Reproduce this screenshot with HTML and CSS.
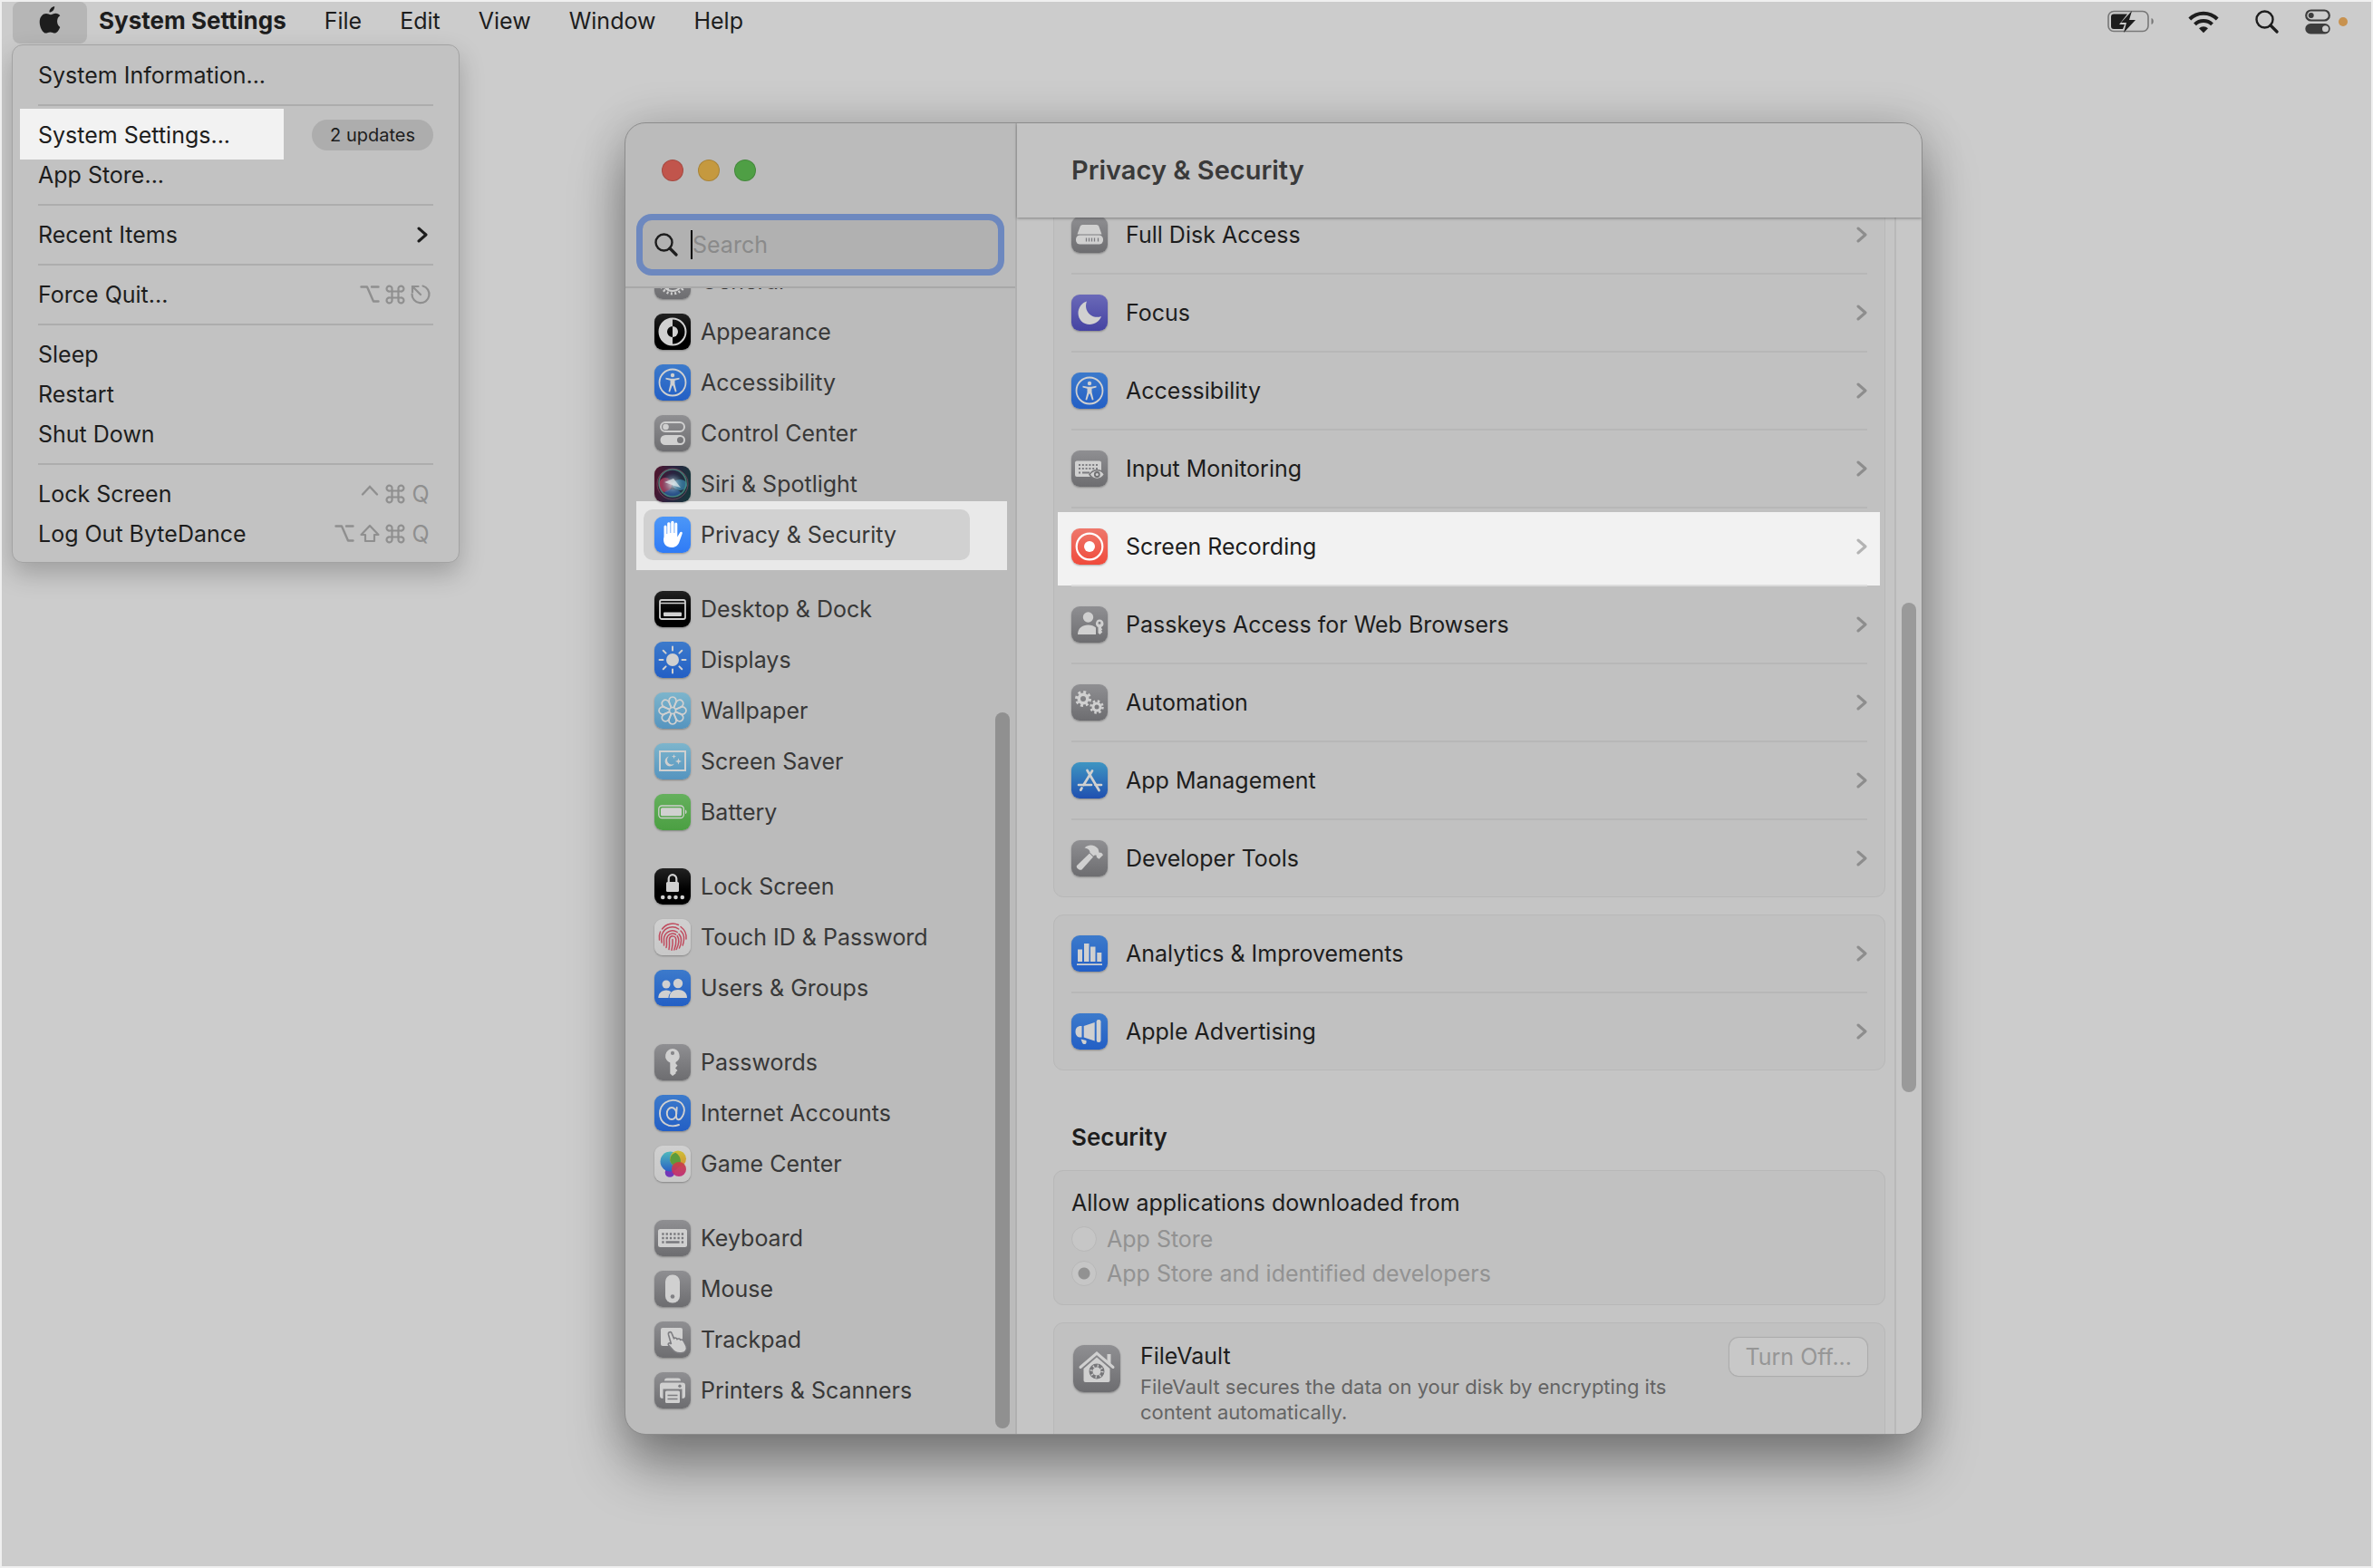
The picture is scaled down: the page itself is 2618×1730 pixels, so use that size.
FILE: index.html
```html
<!DOCTYPE html>
<html lang="en">
<head>
  <meta charset="UTF-8">
  <title>System Settings</title>
  <meta name="viewport" content="width=device-width, initial-scale=1">
  <link rel="stylesheet" href="styles.css">
</head>
<body>
  <!-- Shared icon shapes -->
  <svg class="sprite" aria-hidden="true">
    <defs>
      <linearGradient id="gc-blue" x1="0" y1="0" x2="0" y2="1"><stop offset="0" stop-color="#4fb9bd"/><stop offset="1" stop-color="#2a62c4"/></linearGradient>
      <linearGradient id="gc-yellow" x1="0" y1="0" x2="0" y2="1"><stop offset="0" stop-color="#cfc137"/><stop offset="1" stop-color="#cf8f35"/></linearGradient>
      <linearGradient id="gc-red" x1="0" y1="0" x2="0" y2="1"><stop offset="0" stop-color="#c9443f"/><stop offset="1" stop-color="#c02c78"/></linearGradient>
      <radialGradient id="siri-glow"><stop offset="0" stop-color="#ffffff"/><stop offset="0.35" stop-color="#b9cfd6" stop-opacity="0.8"/><stop offset="1" stop-color="#4b8fa8" stop-opacity="0"/></radialGradient>
      <mask id="gear-big"><rect width="40" height="40" fill="#fff"/><circle cx="13" cy="16" r="3" fill="#000"/></mask>
      <mask id="gear-small"><rect width="40" height="40" fill="#fff"/><circle cx="28" cy="25" r="2.5" fill="#000"/></mask>
    </defs>
    <symbol id="i-chevron" viewBox="0 0 12 18"><path d="M2 2l8 7-8 7" fill="none" stroke="currentColor" stroke-width="3" stroke-linecap="round" stroke-linejoin="round"/></symbol>
    <symbol id="i-search" viewBox="0 0 26 26"><circle cx="10.5" cy="10.5" r="9" fill="none" stroke="currentColor" stroke-width="2.4"/><path d="M17 17l7 7" stroke="currentColor" stroke-width="3.2" stroke-linecap="round"/></symbol>
    <symbol id="i-option" viewBox="0 0 28 28"><path d="M4.500 5.500h6.500l7 16h5.500M16 5.500h7.500" fill="none" stroke="currentColor" stroke-width="2.400" stroke-linecap="round" stroke-linejoin="round"/></symbol>
    <symbol id="i-command" viewBox="0 0 28 28"><path d="M10.500 10.500h7v7h-7zM10.500 10.500H8a3 3 0 1 1 2.500-2.500zM17.500 10.500V8a3 3 0 1 1 2.500 2.500zM17.500 17.500H20a3 3 0 1 1-2.500 2.500zM10.500 17.500V20a3 3 0 1 1-2.500-2.500z" fill="none" stroke="currentColor" stroke-width="2.200"/></symbol>
    <symbol id="i-power" viewBox="0 0 28 28"><path d="M16.500 4.500a9.500 9.500 0 1 1-12 9" fill="none" stroke="currentColor" stroke-width="2.200" stroke-linecap="round"/><path d="M14 14L5.500 5.500M5 11.500V5h6.500" fill="none" stroke="currentColor" stroke-width="2.200" stroke-linecap="round"/></symbol>
    <symbol id="i-control" viewBox="0 0 28 28"><path d="M6 14.500L14 6l8 8.500" fill="none" stroke="currentColor" stroke-width="2.400" stroke-linecap="round"/></symbol>
    <symbol id="i-shift" viewBox="0 0 28 28"><path d="M14 5l9.500 10H19v7H9v-7H4.500z" fill="none" stroke="currentColor" stroke-width="2.200" stroke-linejoin="round"/></symbol>

    <symbol id="i-gear" viewBox="0 0 40 40"><g fill="none" stroke="currentColor"><circle cx="20" cy="20" r="11" stroke-width="2"/><circle cx="20" cy="20" r="14" stroke-width="3" stroke-dasharray="2 2.400"/><circle cx="20" cy="20" r="4" stroke-width="1.500"/><path d="M24 20h7M18 23.500l-3.500 6M18 16.500l-3.500-6" stroke-width="1.500"/></g></symbol>
    <symbol id="i-appearance" viewBox="0 0 40 40"><circle cx="20" cy="20" r="14.500" fill="none" stroke="currentColor" stroke-width="2"/><path d="M20 5.500a14.500 14.500 0 0 0 0 29v-8.500a6 6 0 0 1 0-12z" fill="currentColor"/><path d="M20 14a6 6 0 0 1 0 12z" fill="currentColor"/></symbol>
    <symbol id="i-access" viewBox="0 0 40 40"><circle cx="20" cy="20" r="14.500" fill="none" stroke="currentColor" stroke-width="1.800"/><circle cx="20" cy="12" r="2.200" fill="currentColor"/><path d="M12.500 14.800l5.500 1h4l5.500-1v1.700l-5 1.200v4l2 8.300-1.600.4-2.400-7h-1l-2.400 7-1.600-.4 2-8.300v-4l-5-1.200z" fill="currentColor"/></symbol>
    <symbol id="i-toggles" viewBox="0 0 40 40"><rect x="7" y="8" width="26" height="10" rx="5" fill="none" stroke="currentColor" stroke-width="2"/><circle cx="12.500" cy="13" r="3.300" fill="currentColor"/><path fill-rule="evenodd" d="M12 22h16.500a5.500 5.500 0 0 1 0 11H12a5.500 5.500 0 0 1 0-11zM28.500 24a3.500 3.500 0 1 0 0 7 3.500 3.500 0 0 0 0-7z" fill="currentColor"/></symbol>
    <symbol id="i-siri" viewBox="0 0 40 40"><ellipse cx="12" cy="21" rx="7" ry="8" fill="#c2405f" opacity="0.700"/><ellipse cx="28" cy="21" rx="8" ry="6" fill="#3a86b0" opacity="0.700"/><ellipse cx="20" cy="30" rx="9" ry="4" fill="#2f6cba" opacity="0.600"/><circle cx="20" cy="20" r="12" fill="url(#siri-glow)" opacity="0.700"/><path d="M11 18l10-4 8 10-7-2z" fill="#e3ecee" opacity="0.700"/><circle cx="20" cy="19" r="15" fill="none" stroke="#4b9485" stroke-width="1.500" opacity="0.800"/><circle cx="20" cy="20" r="17" fill="none" stroke="#8b5265" stroke-width="0.700"/></symbol>
    <symbol id="i-hand" viewBox="0 0 40 40"><path d="M11.500 22V11a1.500 1.500 0 0 1 3 0v8h.7V7.500a1.700 1.700 0 0 1 3.300 0V18h.7V6.500a1.700 1.700 0 0 1 3.400 0V18h.7V8a1.500 1.500 0 0 1 3 0v14.500l2.700-4.800c1-1.600 3.300-.8 2.700 1l-3.500 9.800C26.500 32.500 23.500 34 20 34c-6 0-9-3.500-9-9z" fill="currentColor" transform="translate(-1 0)"/></symbol>
    <symbol id="i-desktop" viewBox="0 0 40 40"><rect x="6" y="10" width="28" height="21" rx="2" fill="none" stroke="currentColor" stroke-width="1.800"/><path d="M6 13.500h28" stroke="currentColor" stroke-width="1.500"/><rect x="10" y="23.500" width="20" height="4.500" rx="1" fill="currentColor"/></symbol>
    <symbol id="i-sun" viewBox="0 0 40 40"><circle cx="20" cy="20" r="7" fill="currentColor"/><path d="M20 5.500v4M20 30.500v4M5.500 20h4M30.500 20h4M9.700 9.700l2.900 2.900M27.400 27.400l2.900 2.900M9.700 30.300l2.900-2.900M27.400 12.600l2.900-2.900" stroke="currentColor" stroke-width="2" stroke-linecap="round"/></symbol>
    <symbol id="i-flower" viewBox="0 0 40 40">
      <g fill="none" stroke="currentColor" stroke-width="1.700">
        <path id="petal" d="M18.500 17L16.300 10.500a4 4 0 1 1 7.400 0L21.500 17"/>
        <use href="#petal" transform="rotate(45 20 20)"/><use href="#petal" transform="rotate(90 20 20)"/><use href="#petal" transform="rotate(135 20 20)"/><use href="#petal" transform="rotate(180 20 20)"/><use href="#petal" transform="rotate(225 20 20)"/><use href="#petal" transform="rotate(270 20 20)"/><use href="#petal" transform="rotate(315 20 20)"/>
        <circle cx="20" cy="20" r="3.500"/>
      </g>
    </symbol>
    <symbol id="i-saver" viewBox="0 0 40 40"><rect x="6" y="9" width="28" height="21" fill="none" stroke="currentColor" stroke-width="2"/><path d="M16 14.500a5 5 0 0 0 6 8 5.500 5.500 0 1 1-6-8zM21.500 12l.6 2 2 .6-2 .6-.6 2-.6-2-2-.6 2-.6zM26.500 16.500l.9 2.600 2.600.9-2.600.9-.9 2.600-.9-2.600-2.600-.9 2.600-.9z" fill="currentColor"/></symbol>
    <symbol id="i-battery" viewBox="0 0 40 40"><rect x="4.800" y="13" width="27.500" height="13.500" rx="3.500" fill="none" stroke="currentColor" stroke-width="1.300"/><rect x="7" y="15.200" width="23" height="9" rx="1.500" fill="currentColor"/><path d="M34 17.500c2 .5 2 4 0 4.500z" fill="currentColor"/></symbol>
    <symbol id="i-lock" viewBox="0 0 40 40"><rect x="13" y="15" width="14" height="11" rx="1.500" fill="currentColor"/><path d="M15.700 15v-3.500a4.300 4.300 0 0 1 8.600 0V15" fill="none" stroke="currentColor" stroke-width="2.200"/><g fill="currentColor"><circle cx="9.200" cy="32" r="2.300"/><circle cx="16.500" cy="32" r="2.300"/><circle cx="23.500" cy="32" r="2.300"/><circle cx="30.800" cy="32" r="2.300"/></g></symbol>
    <symbol id="i-finger" viewBox="0 0 40 40"><g fill="none" stroke="currentColor" stroke-width="1.500" stroke-linecap="round"><path d="M5.500 23a15 15 0 0 1 1-9M8.500 11a14.500 14.500 0 0 1 18-4.500M29 8.500a15 15 0 0 1 6 13.500"/><path d="M8 26c-.5-4-.8-7 .7-10a12 12 0 0 1 18-5M29 13a12 12 0 0 1 3.500 10c-.2 2.500-.7 4-1.300 6"/><path d="M10.500 29c.5-3-.5-6 .2-9a9.500 9.500 0 0 1 14.500-5.500M27 16.500a9.500 9.500 0 0 1 2.500 7c0 3-.7 6-2 8.500"/><path d="M13 31.500c1.200-3 0-6.500.5-10a6.700 6.700 0 0 1 10-4.500M25.200 18.500c2 3 2 9-1 15"/><path d="M16 33.500c1.200-4 .2-8 .5-11.500 1-4.500 7-4 7.300.5.200 4.500-.4 8-2 11.500"/><path d="M20 22.500c.4 4 0 8-1 11.800"/></g></symbol>
    <symbol id="i-users" viewBox="0 0 40 40"><g fill="currentColor"><circle cx="13" cy="16" r="4.500"/><path d="M4.300 31c0-5 3.700-8.500 8.700-8.500 2.300 0 4 .7 5.500 2-2 1.700-3 4-3 6.500z"/><circle cx="26" cy="15" r="5.200"/><path d="M16.500 31c0-6 4-9 9.500-9s10 3 10 9z"/></g></symbol>
    <symbol id="i-key" viewBox="0 0 40 40"><path fill-rule="evenodd" d="M20 5a8 8 0 0 1 3.500 15v1.500l2 2-2.500 3 2.500 2.500-2 2v1.500L20 35l-2.700-2.500V20.500A8 8 0 0 1 20 5zm0 2.800a2.100 2.100 0 1 0 0 4.200 2.100 2.100 0 0 0 0-4.200z" fill="currentColor"/></symbol>
    <symbol id="i-at" viewBox="0 0 40 40"><g fill="none" stroke="currentColor" stroke-width="1.900" stroke-linecap="round"><ellipse cx="19" cy="20.500" rx="5.200" ry="6.500"/><path d="M24.700 14l-.7 9.500c0 4.500 3.200 4.300 5 2.700 2.500-2.200 5-8 3.500-12.500C29.500 5 18.500 4 12 8.500 4 14 4 27 12 32c4.500 2.800 10.500 2.800 15 1"/></g></symbol>
    <symbol id="i-game" viewBox="0 0 40 40"><circle cx="17" cy="29.500" r="5.300" fill="#7337b8"/><circle cx="17.500" cy="17.500" r="11" fill="url(#gc-blue)"/><circle cx="26" cy="14.500" r="9" fill="url(#gc-yellow)"/><path d="M17.200 16a9 9 0 0 0 10 7.400 11 11 0 0 0-4-15.600A9 9 0 0 0 17.200 16z" fill="#5c9c3c"/><circle cx="27" cy="26" r="8" fill="url(#gc-red)" opacity="0.950"/></symbol>
    <symbol id="i-keyboard" viewBox="0 0 40 40"><rect x="4" y="10" width="32" height="20" rx="2.500" fill="currentColor"/><path d="M8.300 15.500h24M8.300 20h24" stroke="#78787c" stroke-width="2.300" stroke-dasharray="2.300 2"/><path d="M8.300 24.500h2.300M12.600 24.500h15M29.800 24.500h2.300" stroke="#78787c" stroke-width="2.300"/></symbol>
    <symbol id="i-mouse" viewBox="0 0 40 40"><rect x="12" y="4.500" width="16" height="31" rx="7.500" fill="currentColor"/><circle cx="20" cy="28.500" r="2.300" fill="#808084"/></symbol>
    <symbol id="i-trackpad" viewBox="0 0 40 40"><rect x="7" y="7" width="24" height="20" rx="2" fill="currentColor"/><path d="M18.500 25l-3-10.500c-.7-2.700 2.700-4 3.700-1.300l2.300 5.500c1.500-1 3-.5 3.500.8 1.500-1 3-.5 3.700.8 1.700-.8 3 0 3.700 1.700l2.600 5c1.500 4-1 7-4 7.500-5 1-9-.5-11.500-4l-4-4.500c-1-2 1.300-3.200 3-1z" fill="currentColor" stroke="#7c7c80" stroke-width="1.600"/></symbol>
    <symbol id="i-printer" viewBox="0 0 40 40"><g fill="currentColor"><path d="M11 9.500c0-2 1-3 3-3h12c2 0 3 1 3 3z"/><path d="M9 11.500h22a3 3 0 0 1 3 3V26c0 2-1 3-3.500 3V18.500H9.500V29C7 29 6 28 6 26V14.500a3 3 0 0 1 3-3z"/><rect x="12" y="20.500" width="16" height="13.500" rx="1.500"/></g><circle cx="28" cy="15.200" r="1.700" fill="#7c7c80"/><path d="M14.500 25.500h11M14.500 29.500h11" stroke="#7c7c80" stroke-width="1.500"/></symbol>
    <symbol id="i-disk" viewBox="0 0 40 40"><path d="M12.500 9h15c1.500 0 2.500.8 3 2.200l3 8.300h-27l3-8.300c.5-1.400 1.500-2.200 3-2.200z" fill="currentColor"/><rect x="5" y="20.500" width="30" height="10" rx="4.500" fill="currentColor"/><path d="M16.500 23.500v4M19.500 23.500v4M22.500 23.500v4M25.500 23.500v4M29.500 23.500v4" stroke="#7c7c80" stroke-width="1.300"/></symbol>
    <symbol id="i-moon" viewBox="0 0 40 40"><path d="M17 7.500c-4 10 5 20.500 16 16.500-2 5.500-7 9-13 9-7 0-12.500-5.500-12.500-12.500 0-6 4-11.500 9.500-13z" fill="currentColor"/></symbol>
    <symbol id="i-monitor" viewBox="0 0 40 40"><rect x="4" y="11.500" width="29" height="17.500" rx="2" fill="currentColor"/><path d="M8 16h22M8 20h22" stroke="#7c7c80" stroke-width="2" stroke-dasharray="2 1.800"/><path d="M8 24.500h2M12 24.500h8" stroke="#7c7c80" stroke-width="2"/><path d="M20 26.500c4-6.500 13-6.500 16.500 0-4 6.500-12.500 6.500-16.500 0z" fill="currentColor" stroke="#78787a" stroke-width="1.500"/><circle cx="28.300" cy="26.500" r="2.500" fill="none" stroke="#707072" stroke-width="1.800"/></symbol>
    <symbol id="i-record" viewBox="0 0 40 40"><circle cx="20" cy="20" r="14.300" fill="none" stroke="currentColor" stroke-width="2.200"/><circle cx="20" cy="20" r="6" fill="currentColor"/></symbol>
    <symbol id="i-passkey" viewBox="0 0 40 40"><circle cx="18.500" cy="12" r="5.700" fill="currentColor"/><path d="M7 31c0-7 5-10.500 11.500-10.500 3.500 0 6.500 1 8.500 3V31z" fill="currentColor"/><path fill-rule="evenodd" d="M31 14.500a4.500 4.500 0 0 1 2 8.500v1l1.300 1.300-1.300 1.500 1.300 1.500L31.500 31l-2-1.500V23a4.500 4.500 0 0 1 1.500-8.500zm0 2.300a1.500 1.500 0 1 0 0 3 1.500 1.500 0 0 0 0-3z" fill="currentColor"/></symbol>
    <symbol id="i-gears" viewBox="0 0 40 40"><g mask="url(#gear-big)"><circle cx="13" cy="16" r="6.500" fill="currentColor"/><circle cx="13" cy="16" r="7.500" fill="none" stroke="currentColor" stroke-width="3" stroke-dasharray="2.900 2.990"/></g><g mask="url(#gear-small)"><circle cx="28" cy="25" r="5.500" fill="currentColor"/><circle cx="28" cy="25" r="6.500" fill="none" stroke="currentColor" stroke-width="2.500" stroke-dasharray="2.500 2.605"/></g></symbol>
    <symbol id="i-appstore" viewBox="0 0 40 40"><path d="M23 9.500l-9.500 15.500M17.500 9l13 22M11.500 28.500l-1.300 2.200" stroke="currentColor" stroke-width="2.700" stroke-linecap="round"/><path d="M8 25h14M26.500 25h6.500" stroke="currentColor" stroke-width="2.700" stroke-linecap="round"/></symbol>
    <symbol id="i-hammer" viewBox="0 0 40 40"><path d="M6 30l14-13.500 4 4L11.500 34.500c-2 1.500-7-2-5.500-4.500z" fill="currentColor" transform="translate(0 -2)"/><path d="M14.500 8.500c5-4.500 11-3.500 15 1l1 4c1 .8 2-.2 3 .8l1.500 2-4.500 4.500-2.500-1.800c-.6-1 .2-2-.7-2.500-1.300-.3-2.200.3-3 1l-4-4c.6-2-1.800-4.500-5.800-5z" fill="currentColor"/></symbol>
    <symbol id="i-bars" viewBox="0 0 40 40"><path d="M7 15.500h5V29H7zM14 9h5.500v20H14zM21 12.500h5.500V29H21zM28.300 19h5v10h-5zM6 31.300h28v1.700H6z" fill="currentColor"/></symbol>
    <symbol id="i-horn" viewBox="0 0 40 40"><path d="M11.500 14v12.500c-4 .5-7-1.500-7-6.200s3-6.800 7-6.300zM13.700 14l12-4v20.500l-12-4zM10.500 28.500l6 1.500v2.500c-.6 2-3.500 2-4.500 0z" fill="currentColor"/><rect x="27.700" y="7" width="4.800" height="25" rx="2.200" fill="currentColor"/></symbol>
    <symbol id="i-vault" viewBox="0 0 52 52"><path d="M8 24.500L26 9l18 15.500" fill="none" stroke="currentColor" stroke-width="3" stroke-linecap="round"/><path d="M37.500 10h4v11l-4-3.500z" fill="currentColor"/><path d="M26 13.500l14.500 12.500v13a2 2 0 0 1-2 2h-25a2 2 0 0 1-2-2V26z" fill="currentColor"/><circle cx="26" cy="29" r="6.500" fill="none" stroke="#77777a" stroke-width="4"/><circle cx="26" cy="29" r="6" fill="none" stroke="currentColor" stroke-width="3" stroke-dasharray="1.200 3.500"/></symbol>
  </svg>

  <div class="desktop">
    <header class="menubar">
      <button class="apple-button" type="button" aria-label="Apple menu">
        <svg viewBox="0 0 28 34"><path d="M19.500 1c.2 3.800-3 7-6 7C13 4.500 16.500 1.300 19.500 1zM26 25.500c-1.500 4-4 7-6.200 7-2 0-2.900-1.200-5.300-1.200s-3.200 1.200-5.200 1.200C6 32.500 2 26 2 19.300 2 13 6 9.500 9.700 9.500c2.300 0 3.700 1.300 5.300 1.300 1.500 0 3.200-1.500 6-1.500 2 0 4 1 5 2.700-5 3-4 11 0 13.500z" fill="currentColor"/></svg>
      </button>
      <nav class="menubar-items">
        <a class="app-name" href="#">System Settings</a>
        <a href="#">File</a>
        <a href="#">Edit</a>
        <a href="#">View</a>
        <a href="#">Window</a>
        <a href="#">Help</a>
      </nav>
      <div class="status">
        <svg class="status-battery" viewBox="0 0 52 26"><rect x="1" y="1.500" width="44" height="22" rx="6" fill="none" stroke="#777" stroke-width="1.600"/><path d="M48.500 9c3 .8 3 6.200 0 7z" fill="#777"/><path d="M7 4.500h15L13 16h6l-2 5H7a3 3 0 0 1-3-3V7.500a3 3 0 0 1 3-3z" fill="currentColor"/><path d="M27 1L15 14h6l-3 11 13-14h-7z" fill="currentColor"/></svg>
        <svg class="status-wifi" viewBox="0 0 34 26"><g fill="none" stroke="currentColor" stroke-width="4"><path d="M1.800 10a21.500 21.500 0 0 1 30.400 0"/><path d="M7.500 15.800a13.500 13.500 0 0 1 19 0"/></g><path d="M12 20.300a7.300 7.300 0 0 1 10 0l-5 5z" fill="currentColor"/></svg>
        <svg class="status-search"><use href="#i-search"/></svg>
        <svg class="status-toggles" viewBox="0 0 28 28"><rect x="1.200" y="1.500" width="25.600" height="11" rx="5.500" fill="none" stroke="#3c3c3c" stroke-width="2.200"/><circle cx="6.700" cy="7" r="3" fill="#3c3c3c"/><path fill-rule="evenodd" d="M6 16h16a5.700 5.700 0 0 1 0 11.400H6A5.700 5.700 0 0 1 6 16zm16.500 2.200a3.500 3.500 0 1 0 0 7 3.500 3.500 0 0 0 0-7z" fill="#3c3c3c"/></svg>
        <span class="status-dot"></span>
      </div>
    </header>

    <div class="apple-menu">
      <button type="button">System Information...</button>
      <hr>
      <button type="button" class="spotlit"><span>System Settings...</span><span class="badge">2 updates</span></button>
      <button type="button">App Store...</button>
      <hr>
      <button type="button">Recent Items <svg class="submenu"><use href="#i-chevron"/></svg></button>
      <hr>
      <button type="button">Force Quit... <kbd><svg><use href="#i-option"/></svg><svg><use href="#i-command"/></svg><svg><use href="#i-power"/></svg></kbd></button>
      <hr>
      <button type="button">Sleep</button>
      <button type="button">Restart</button>
      <button type="button">Shut Down</button>
      <hr>
      <button type="button">Lock Screen <kbd><svg><use href="#i-control"/></svg><svg><use href="#i-command"/></svg><span>Q</span></kbd></button>
      <button type="button">Log Out ByteDance <kbd><svg><use href="#i-option"/></svg><svg><use href="#i-shift"/></svg><svg><use href="#i-command"/></svg><span>Q</span></kbd></button>
    </div>

    <main class="window">
      <aside class="sidebar">
        <div class="sidebar-head">
          <div class="lights">
            <button class="light close" type="button" aria-label="Close"></button>
            <button class="light minimize" type="button" aria-label="Minimize"></button>
            <button class="light zoom" type="button" aria-label="Zoom"></button>
          </div>
          <label class="search">
            <svg><use href="#i-search"/></svg>
            <span class="caret"></span>
            <input type="text" placeholder="Search" aria-label="Search">
          </label>
        </div>
        <nav class="sidebar-list">
          <div class="group">
            <a href="#"><svg class="icon gray"><use href="#i-gear"/></svg>General</a>
            <a href="#"><svg class="icon black"><use href="#i-appearance"/></svg>Appearance</a>
            <a href="#"><svg class="icon blue"><use href="#i-access"/></svg>Accessibility</a>
            <a href="#"><svg class="icon gray"><use href="#i-toggles"/></svg>Control Center</a>
            <a href="#"><svg class="icon siri"><use href="#i-siri"/></svg>Siri &amp; Spotlight</a>
            <a href="#" class="selected"><svg class="icon bright-blue"><use href="#i-hand"/></svg>Privacy &amp; Security</a>
          </div>
          <div class="group">
            <a href="#"><svg class="icon black"><use href="#i-desktop"/></svg>Desktop &amp; Dock</a>
            <a href="#"><svg class="icon blue"><use href="#i-sun"/></svg>Displays</a>
            <a href="#"><svg class="icon sky"><use href="#i-flower"/></svg>Wallpaper</a>
            <a href="#"><svg class="icon sky"><use href="#i-saver"/></svg>Screen Saver</a>
            <a href="#"><svg class="icon green"><use href="#i-battery"/></svg>Battery</a>
          </div>
          <div class="group">
            <a href="#"><svg class="icon black"><use href="#i-lock"/></svg>Lock Screen</a>
            <a href="#"><svg class="icon white touch"><use href="#i-finger"/></svg>Touch ID &amp; Password</a>
            <a href="#"><svg class="icon blue"><use href="#i-users"/></svg>Users &amp; Groups</a>
          </div>
          <div class="group">
            <a href="#"><svg class="icon gray"><use href="#i-key"/></svg>Passwords</a>
            <a href="#"><svg class="icon blue"><use href="#i-at"/></svg>Internet Accounts</a>
            <a href="#"><svg class="icon white"><use href="#i-game"/></svg>Game Center</a>
          </div>
          <div class="group">
            <a href="#"><svg class="icon gray"><use href="#i-keyboard"/></svg>Keyboard</a>
            <a href="#"><svg class="icon gray"><use href="#i-mouse"/></svg>Mouse</a>
            <a href="#"><svg class="icon gray"><use href="#i-trackpad"/></svg>Trackpad</a>
            <a href="#"><svg class="icon gray"><use href="#i-printer"/></svg>Printers &amp; Scanners</a>
          </div>
          <span class="thumb sidebar-thumb"></span>
        </nav>
      </aside>

      <section class="panel">
        <header class="panel-head"><h1>Privacy &amp; Security</h1></header>
        <div class="panel-body">
          <div class="panel-content">
            <div class="card rows">
              <a href="#"><svg class="icon gray"><use href="#i-disk"/></svg><span>Full Disk Access</span><svg class="chevron"><use href="#i-chevron"/></svg></a>
              <a href="#"><svg class="icon indigo"><use href="#i-moon"/></svg><span>Focus</span><svg class="chevron"><use href="#i-chevron"/></svg></a>
              <a href="#"><svg class="icon blue"><use href="#i-access"/></svg><span>Accessibility</span><svg class="chevron"><use href="#i-chevron"/></svg></a>
              <a href="#"><svg class="icon gray"><use href="#i-monitor"/></svg><span>Input Monitoring</span><svg class="chevron"><use href="#i-chevron"/></svg></a>
              <a href="#" class="spotlit"><svg class="icon red"><use href="#i-record"/></svg><span>Screen Recording</span><svg class="chevron"><use href="#i-chevron"/></svg></a>
              <a href="#"><svg class="icon gray"><use href="#i-passkey"/></svg><span>Passkeys Access for Web Browsers</span><svg class="chevron"><use href="#i-chevron"/></svg></a>
              <a href="#"><svg class="icon gray"><use href="#i-gears"/></svg><span>Automation</span><svg class="chevron"><use href="#i-chevron"/></svg></a>
              <a href="#"><svg class="icon store"><use href="#i-appstore"/></svg><span>App Management</span><svg class="chevron"><use href="#i-chevron"/></svg></a>
              <a href="#"><svg class="icon gray"><use href="#i-hammer"/></svg><span>Developer Tools</span><svg class="chevron"><use href="#i-chevron"/></svg></a>
            </div>
            <div class="card rows">
              <a href="#"><svg class="icon blue"><use href="#i-bars"/></svg><span>Analytics &amp; Improvements</span><svg class="chevron"><use href="#i-chevron"/></svg></a>
              <a href="#"><svg class="icon blue"><use href="#i-horn"/></svg><span>Apple Advertising</span><svg class="chevron"><use href="#i-chevron"/></svg></a>
            </div>
            <h2>Security</h2>
            <fieldset class="card downloads">
              <p>Allow applications downloaded from</p>
              <label><input type="radio" name="source" disabled>App Store</label>
              <label><input type="radio" name="source" disabled checked>App Store and identified developers</label>
            </fieldset>
            <div class="card vault">
              <svg class="icon gray"><use href="#i-vault"/></svg>
              <div class="vault-text">
                <h3>FileVault</h3>
                <p>FileVault secures the data on your disk by encrypting its content automatically.</p>
              </div>
              <button type="button" disabled>Turn Off...</button>
            </div>
          </div>
          <div class="track"><span class="thumb panel-thumb"></span></div>
        </div>
      </section>
    </main>
  </div>
</body>
</html>
```

FILE: styles.css
```css
* {
  box-sizing: border-box;
}
body {
  margin: 0;
  font-family: Inter, "Liberation Sans", sans-serif;
  font-size: 25px;
  line-height: 32px;
  color: #1d1d1d;
}
a {
  color: inherit;
  text-decoration: none;
}
button, input {
  font: inherit;
  color: inherit;
}
h1, h2, h3, p {
  margin: 0;
}
.sprite {
  position: absolute;
  width: 0;
  height: 0;
}
.desktop {
  position: relative;
  height: 100vh;
  min-height: 1000px;
  overflow: hidden;
  border: 2px solid #efefef;
  background: #cccccc;
}

/* Menu bar */
.menubar {
  display: flex;
  align-items: flex-start;
  padding: 0 26px 0 12px;
  line-height: 42px;
}
.apple-button {
  width: 82px;
  height: 46px;
  padding: 4px 0 10px;
  border: 0;
  border-radius: 8px;
  background: #b6b6b6;
  line-height: 0;
}
.apple-button svg {
  width: 28px;
  height: 32px;
}
.menubar-items {
  display: flex;
  align-items: baseline;
  gap: 42px;
  margin-left: 13px;
}
.app-name {
  font-size: 26px;
  font-weight: 700;
}
.status {
  display: flex;
  align-items: center;
  height: 44px;
  margin-left: auto;
}
.status-battery {
  width: 52px;
  height: 26px;
  margin-right: 37px;
}
.status-wifi {
  width: 34px;
  height: 26px;
  margin-right: 40px;
}
.status-search {
  width: 26px;
  height: 26px;
  margin-right: 29px;
}
.status-toggles {
  width: 28px;
  height: 28px;
  margin-right: 9px;
}
.status-dot {
  width: 10px;
  height: 10px;
  border-radius: 50%;
  background: #c8924f;
}

/* Apple menu */
.apple-menu {
  position: absolute;
  left: 11px;
  top: 47px;
  width: 494px;
  padding: 11px 28px 9px;
  border: 1px solid #a3a3a3;
  border-radius: 12px;
  background: #c2c2c2;
  box-shadow: 0 12px 28px rgba(0, 0, 0, 0.22);
  isolation: isolate;
}
.apple-menu button {
  position: relative;
  display: flex;
  align-items: center;
  justify-content: space-between;
  width: 100%;
  height: 44px;
  padding: 0;
  border: 0;
  background: none;
}
.apple-menu hr {
  height: 2px;
  margin: 10px 0;
  border: 0;
  background: #adadad;
}
.apple-menu .spotlit::before {
  content: "";
  position: absolute;
  z-index: -1;
  left: -20px;
  top: -7px;
  width: 291px;
  height: 56px;
  background: #f2f2f2;
}
.badge {
  padding: 0 20px;
  border-radius: 17px;
  background: #adadad;
  font-size: 20px;
  line-height: 34px;
}
.submenu {
  width: 12px;
  height: 18px;
  margin-right: 6px;
}
.apple-menu kbd {
  display: flex;
  font-family: inherit;
  color: #8f8f8f;
}
.apple-menu kbd svg, .apple-menu kbd span {
  width: 28px;
  height: 28px;
  line-height: 28px;
  text-align: center;
}

/* Settings window */
.window {
  position: absolute;
  left: 688px;
  right: 496px;
  top: 134px;
  bottom: 146px;
  display: grid;
  grid-template-columns: 432px 1fr;
  overflow: hidden;
  border-radius: 22px;
  background: #c5c5c5;
  outline: 1px solid #8c8c8c;
  box-shadow: 0 36px 60px rgba(0, 0, 0, 0.38), 0 0 50px rgba(0, 0, 0, 0.16);
}
.sidebar {
  display: flex;
  flex-direction: column;
  min-height: 0;
  border-right: 2px solid #b0b0b0;
  background: #bbbbbb;
}
.sidebar-head {
  padding: 40px 12px 12px;
  border-bottom: 2px solid #a8a8a8;
}
.lights {
  display: flex;
  gap: 16px;
  padding-left: 28px;
}
.light {
  width: 24px;
  height: 24px;
  padding: 0;
  border: 1px solid rgba(0, 0, 0, 0.14);
  border-radius: 50%;
}
.close {
  background: #c1554c;
}
.minimize {
  background: #c5993f;
}
.zoom {
  background: #4f9f45;
}
.search {
  display: flex;
  align-items: center;
  height: 68px;
  margin-top: 36px;
  padding-left: 13px;
  border: 7px solid #6d88bf;
  border-radius: 17px;
  background: #b1b1b1;
}
.search svg {
  flex: none;
  width: 26px;
  height: 26px;
}
.caret {
  flex: none;
  width: 2px;
  height: 32px;
  margin-left: 14px;
  background: #000000;
}
.search input {
  width: 100%;
  min-width: 0;
  padding: 0;
  border: 0;
  outline: 0;
  background: none;
}
.search input::placeholder {
  color: #8a8a8a;
  opacity: 1;
}
.sidebar-list {
  position: relative;
  flex: 1;
  min-height: 0;
  overflow: hidden;
  padding: 0 50px 0 20px;
  color: #383838;
  isolation: isolate;
}
.group {
  margin-bottom: 26px;
}
/* list is scrolled a little past its first row */
.group:first-child {
  margin-top: -36px;
}
.group a {
  position: relative;
  display: flex;
  align-items: center;
  gap: 11px;
  height: 56px;
  padding-left: 12px;
}
.selected {
  border-radius: 10px;
  background: #d1d1d1;
}
.selected::before {
  content: "";
  position: absolute;
  z-index: -1;
  left: -8px;
  right: -41px;
  top: -9px;
  bottom: -11px;
  background: #e9e9e9;
}
.thumb {
  position: absolute;
  width: 16px;
  border-radius: 8px;
  background: #909090;
}
.sidebar-thumb {
  right: 6px;
  top: 37%;
  bottom: 6px;
}

/* Icon tiles */
.icon {
  flex: none;
  width: 40px;
  height: 40px;
  border-radius: 9px;
  color: #d0d0d0;
  box-shadow: 0 1px 2px rgba(0, 0, 0, 0.3);
}
.gray {
  background: linear-gradient(#8f8f92, #6d6d70);
}
.black {
  background: linear-gradient(#222222, #000000 60%);
}
.blue {
  background: linear-gradient(#3c7acb, #235fc5);
}
.bright-blue {
  background: linear-gradient(#4c97f8, #2f7bf6);
  color: #ffffff;
}
.sky {
  background: linear-gradient(#7db5cc, #5594bf);
}
.green {
  background: linear-gradient(#65b05d, #4b9f42);
}
.white {
  background: linear-gradient(#d0d0d0, #c8c8c8);
}
.touch {
  color: #c04b5e;
}
.indigo {
  background: linear-gradient(#6a69b8, #4543a2);
}
.red {
  background: linear-gradient(#ee786c, #f04a3b);
  color: #ffffff;
}
.store {
  background: linear-gradient(#3e95c2, #2050b0);
}
.siri {
  background: linear-gradient(100deg, #54142c, #2a2340 45%, #153a3c);
}

/* Right panel */
.panel {
  display: flex;
  flex-direction: column;
  min-width: 0;
  min-height: 0;
}
.panel-head {
  position: relative;
  z-index: 1;
  display: flex;
  align-items: center;
  height: 104px;
  padding-left: 60px;
  background: #c3c3c3;
  box-shadow: 0 1px 3px rgba(0, 0, 0, 0.35);
}
h1 {
  font-size: 29px;
  font-weight: 600;
  color: #3a3a3a;
}
.panel-body {
  flex: 1;
  display: flex;
  min-height: 0;
}
.panel-content {
  flex: 1;
  display: flex;
  flex-direction: column;
  min-width: 0;
  overflow: hidden;
  padding: 0 10px 0 40px;
}
.card {
  flex: none;
  margin: 0 0 19px;
  padding: 0 19px;
  border: 1px solid #b8b8b8;
  border-radius: 11px;
  background: #c1c1c1;
}
.card:first-child {
  margin-top: -24px;
}
.rows {
  isolation: isolate;
}
.rows a {
  position: relative;
  display: flex;
  align-items: center;
  gap: 20px;
  height: 84px;
}
.rows a + a {
  height: 86px;
  border-top: 2px solid #b7b7b7;
}
.rows .spotlit::before {
  content: "";
  position: absolute;
  z-index: -1;
  left: -15px;
  right: -14px;
  top: 4px;
  bottom: -1px;
  background: #f2f2f2;
}
.rows .spotlit + a {
  border-top-color: #dcdcdc;
}
.chevron {
  width: 12px;
  height: 18px;
  margin-left: auto;
  color: #8d8d8d;
}
.spotlit .chevron {
  color: #b3b3b3;
}
h2 {
  margin: 39px 20px 20px;
  font-size: 26px;
  font-weight: 600;
}
.downloads {
  padding: 19px 19px 15px;
}
.downloads p {
  margin-bottom: 5px;
}
.downloads label {
  display: flex;
  align-items: center;
  gap: 11px;
  height: 38px;
  color: #929292;
}
.downloads input {
  appearance: none;
  width: 28px;
  height: 28px;
  margin: 0;
  border: 1px solid #b8b8b8;
  border-radius: 50%;
  background: #c6c6c6;
}
.downloads input:checked {
  background: radial-gradient(circle, #929292 6px, #c6c6c6 7px);
}
.vault {
  display: flex;
  align-items: flex-start;
  height: 200px;
  padding-top: 20px;
}
.vault .icon {
  width: 52px;
  height: 52px;
  margin: 4px 22px 0 2px;
  border-radius: 12px;
}
.vault-text {
  flex: 1;
  max-width: 620px;
}
h3 {
  font-size: 25px;
  font-weight: 400;
}
.vault-text p {
  margin-top: 4px;
  font-size: 22px;
  line-height: 28px;
  color: #646464;
}
.vault button {
  height: 42px;
  margin: -4px 0 0 auto;
  padding: 0 17px;
  border: 0;
  border-radius: 10px;
  background: #c8c8c8;
  box-shadow: 0 0 1px 1px rgba(0, 0, 0, 0.12);
  color: #969696;
}
.track {
  position: relative;
  flex: none;
  width: 30px;
  border-left: 2px solid #b8b8b8;
  background: #c7c7c7;
}
.panel-thumb {
  right: 6px;
  top: 425px;
  height: 540px;
  background: #9a9a9a;
}
```
